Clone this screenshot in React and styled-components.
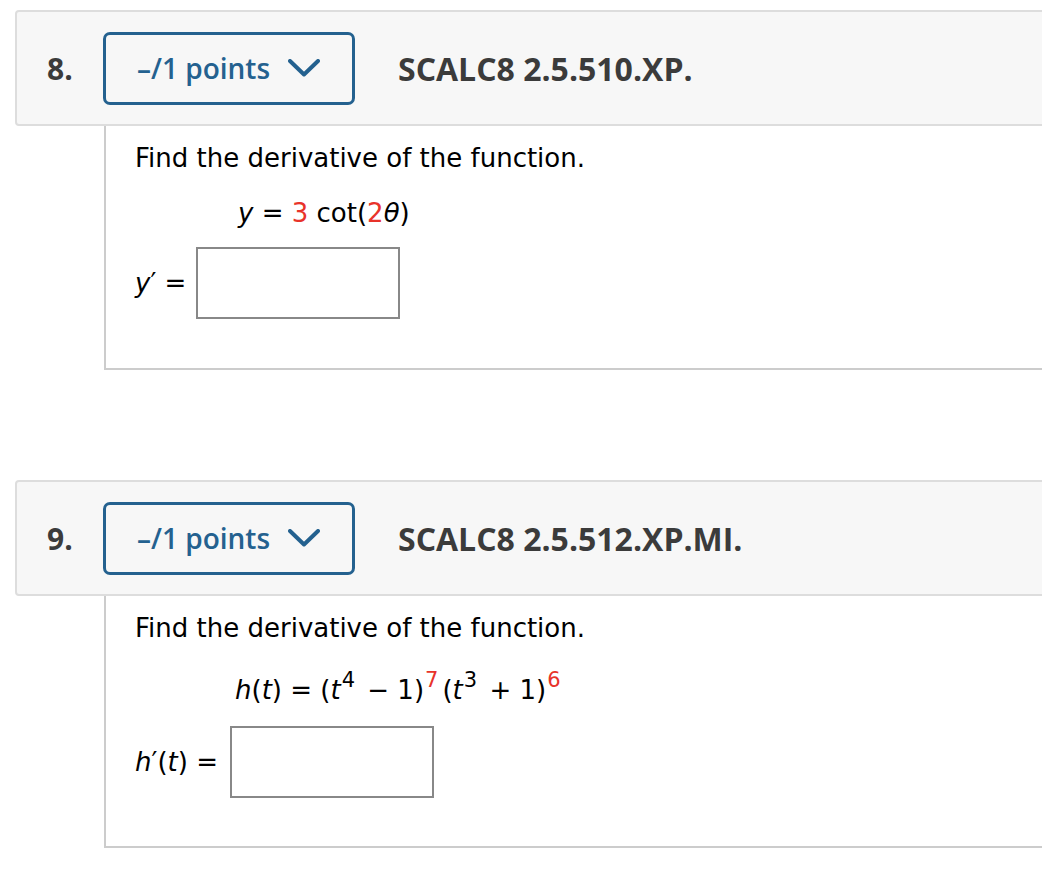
import React from 'react'
import styled, { createGlobalStyle } from 'styled-components'

const GlobalStyle = createGlobalStyle`
  html, body {
    margin: 0;
    padding: 0;
    background: #ffffff;
    overflow: hidden;
  }
`

const Page = styled.div`
  padding: 10px 0 0 15px;
  width: 1200px;
`

const Question = styled.section`
  margin-bottom: 110px;
`

const Header = styled.div`
  display: flex;
  align-items: center;
  height: 112px;
  background: #f7f7f7;
  border: 2px solid #dddddd;
  border-radius: 4px;
  font-family: "Open Sans", "Liberation Sans", sans-serif;
`

const Number = styled.div`
  width: 56px;
  padding-left: 30px;
  font-size: 30px;
  font-weight: 700;
  color: #3b3b3b;
`

const PointsButton = styled.button`
  display: flex;
  align-items: center;
  gap: 18px;
  box-sizing: border-box;
  width: 252px;
  height: 73px;
  padding: 0 0 0 31px;
  background: #f7f7f7;
  border: 3px solid #24618f;
  border-radius: 7px;
  color: #24618f;
  font-family: "Open Sans", "Liberation Sans", sans-serif;
  font-size: 28px;
  font-weight: 600;
  cursor: pointer;
`

const Title = styled.h2`
  margin: 0 0 0 43px;
  font-size: 32px;
  font-weight: 700;
  color: #3b3b3b;
`

const Body = styled.div`
  margin-left: 89px;
  border-left: 2px solid #cccccc;
  border-bottom: 2px solid #cccccc;
  padding: ${p => p.$top}px 0 ${p => p.$bottom}px 29px;
  font-family: "DejaVu Sans", Verdana, sans-serif;
  font-size: 26px;
  color: #000000;
`

const Prompt = styled.p`
  margin: 0;
  line-height: 34px;
`

const Equation = styled.div`
  margin: ${p => p.$gap}px 0 0 ${p => p.$indent}px;
  line-height: 34px;
  white-space: pre;
`

const Var = styled.i``

const Red = styled.span`
  color: #e8332a;
`

const Sup = styled.sup`
  font-size: 21px;
  line-height: 0;
  vertical-align: 12px;
  margin: 0 4px 0 1px;
  color: ${p => (p.$red ? '#e8332a' : 'inherit')};
`

const AnswerRow = styled.div`
  display: flex;
  align-items: center;
  gap: ${p => p.$gap}px;
  margin-top: ${p => p.$top}px;
`

const AnswerBox = styled.input`
  box-sizing: border-box;
  width: 204px;
  height: 72px;
  margin: 0;
  padding: 0;
  border: 2px solid #888888;
  background: #ffffff;
  outline: none;
`

function Chevron() {
  return (
    <svg width="32" height="18" viewBox="0 0 32 18" fill="none">
      <polyline points="2,2 16,15.5 30,2" stroke="#24618f" strokeWidth="4" strokeLinecap="round" strokeLinejoin="round" />
    </svg>
  )
}

function QuestionHeader({ number, code }) {
  return (
    <Header>
      <Number>{number}.</Number>
      <PointsButton>
        <span>–/1 points</span>
        <Chevron />
      </PointsButton>
      <Title>{code}</Title>
    </Header>
  )
}

export default function App() {
  return (
    <>
      <GlobalStyle />
      <Page>
        <Question>
          <QuestionHeader number={8} code="SCALC8 2.5.510.XP." />
          <Body $top={15} $bottom={49}>
            <Prompt>Find the derivative of the function.</Prompt>
            <Equation $gap={21} $indent={103}>
              <Var>y</Var> = <Red>3</Red> cot(<Red>2</Red><Var>θ</Var>)
            </Equation>
            <AnswerRow $gap={10} $top={17}>
              <span><Var>y</Var>′ =</span>
              <AnswerBox type="text" />
            </AnswerRow>
          </Body>
        </Question>
        <Question>
          <QuestionHeader number={9} code="SCALC8 2.5.512.XP.MI." />
          <Body $top={15} $bottom={48}>
            <Prompt>Find the derivative of the function.</Prompt>
            <Equation $gap={28} $indent={100}>
              <Var>h</Var>(<Var>t</Var>) = (<Var>t</Var><Sup>4</Sup> − 1)<Sup $red>7</Sup>(<Var>t</Var><Sup>3</Sup> + 1)<Sup $red>6</Sup>
            </Equation>
            <AnswerRow $gap={12} $top={19}>
              <span><Var>h</Var>′(<Var>t</Var>) =</span>
              <AnswerBox type="text" />
            </AnswerRow>
          </Body>
        </Question>
      </Page>
    </>
  )
}
